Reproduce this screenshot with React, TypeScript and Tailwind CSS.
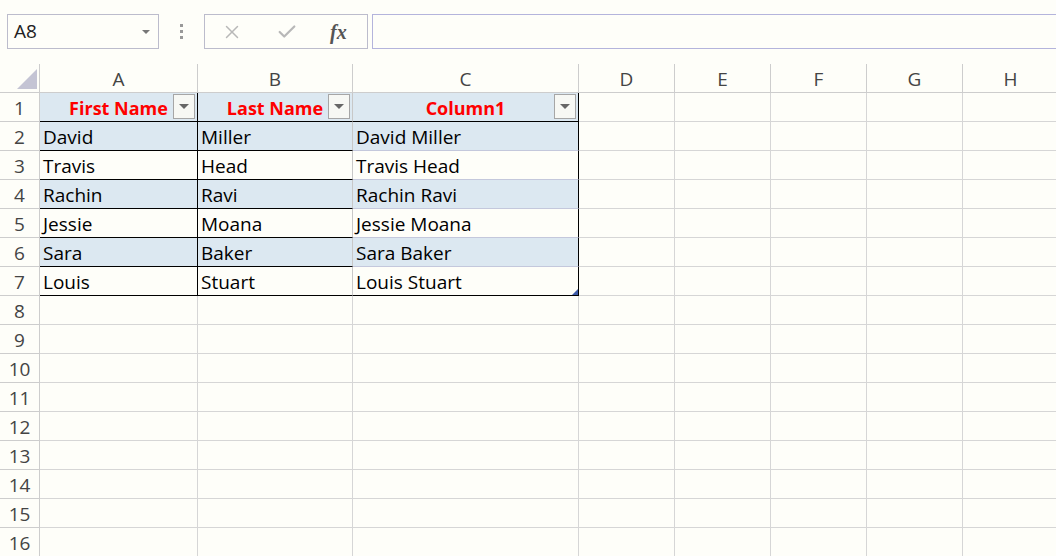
import { X, Check } from 'lucide-react';

const cols = ['A', 'B', 'C', 'D', 'E', 'F', 'G', 'H'];

const people = [
  ['David', 'Miller'],
  ['Travis', 'Head'],
  ['Rachin', 'Ravi'],
  ['Jessie', 'Moana'],
  ['Sara', 'Baker'],
  ['Louis', 'Stuart'],
];

const font = { fontFamily: '"Open Sans", "Noto Sans", sans-serif' };

function FilterButton() {
  return (
    <div className="absolute right-[2px] top-[1px] w-[22px] h-[25px] border border-[#a6a6a6] bg-[#f7f8f4] flex items-center justify-center">
      <div className="w-0 h-0 border-l-[5px] border-r-[5px] border-t-[5px] border-l-transparent border-r-transparent border-t-[#666]" />
    </div>
  );
}

function TopBar() {
  return (
    <div className="h-[64px] flex items-start pt-[14px] pl-[7px]">
      <div className="w-[152px] h-[35px] border border-[#bcbccc] flex items-center justify-between pl-[6px] pr-[8px] text-[19px] text-[#222]">
        <span>A8</span>
        <div className="w-0 h-0 border-l-[4px] border-r-[4px] border-t-[4px] border-l-transparent border-r-transparent border-t-[#777]" />
      </div>
      <div className="w-[45px] h-[35px] flex flex-col items-center justify-center gap-[3px]">
        <div className="w-[3px] h-[3px] bg-[#999]" />
        <div className="w-[3px] h-[3px] bg-[#999]" />
        <div className="w-[3px] h-[3px] bg-[#999]" />
      </div>
      <div className="w-[164px] h-[35px] border border-[#bcbccc] flex items-center pl-[16px]">
        <X className="w-[22px] h-[22px] text-[#b8b8b8]" strokeWidth={1.6} />
        <Check className="w-[22px] h-[22px] text-[#b8b8b8] ml-[33px]" strokeWidth={2.4} />
        <span className="ml-[32px] text-[20px] italic font-bold text-[#555]" style={{ fontFamily: '"Liberation Serif", serif' }}>
          fx
        </span>
      </div>
      <div className="flex-1 ml-[4px] h-[35px] border border-[#b4b4dc] border-r-0" />
    </div>
  );
}

export default function App() {
  const grid = 'border-r border-b border-[#d6d6d6]';
  const rowHead = 'border-r border-b border-[#cdcdcd] flex items-center justify-center pt-[2px] text-[19px] text-[#444]';
  const band = (i: number) => (i % 2 === 0 ? 'bg-[#dce8f1]' : '');
  const cell = 'flex items-center pl-[3px] pt-[2px] text-[19px] text-black whitespace-nowrap overflow-hidden';

  return (
    <div className="w-[1056px] h-[556px] overflow-hidden bg-[#fefef9]" style={font}>
      <TopBar />
      <div className="grid grid-cols-[40px_158px_155px_226px_96px_96px_96px_96px_96px] auto-rows-[29px]">
        {/* column headers */}
        <div className="border-r border-b border-[#cdcdcd] relative">
          <div className="absolute right-[2px] bottom-[3px] w-0 h-0 border-l-[20px] border-b-[20px] border-l-transparent border-b-[#c4c4d4]" />
        </div>
        {cols.map((c) => (
          <div key={c} className="border-r border-b border-[#cdcdcd] flex items-center justify-center pt-[3px] text-[19px] text-[#444]">
            {c}
          </div>
        ))}

        {/* row 1: table header */}
        <div className={rowHead}>1</div>
        <div className="relative bg-[#dce8f1] border-r border-b border-r-black border-b-black flex items-center justify-center pt-[2px] text-[18px] font-bold text-[#f00] whitespace-nowrap">
          First Name
          <FilterButton />
        </div>
        <div className="relative bg-[#dce8f1] border-r border-b border-r-[#c8c8c8] border-b-black flex items-center justify-center pt-[2px] text-[18px] font-bold text-[#f00] whitespace-nowrap">
          Last Name
          <FilterButton />
        </div>
        <div className="relative bg-[#dce8f1] border-r border-b border-r-black border-b-black flex items-center justify-center pt-[2px] text-[18px] font-bold text-[#f00] whitespace-nowrap">
          Column1
          <FilterButton />
        </div>
        {cols.slice(3).map((c) => (
          <div key={c} className={grid} />
        ))}

        {/* data rows */}
        {people.map(([first, last], i) => {
          const last7 = i === people.length - 1;
          return [
            <div key={`h${i}`} className={rowHead}>{i + 2}</div>,
            <div key={`a${i}`} className={`${band(i)} border-r border-b border-black ${cell}`}>
              {first}
            </div>,
            <div key={`b${i}`} className={`${band(i)} border-r border-b border-r-[#c8c8c8] border-b-black ${cell}`}>
              {last}
            </div>,
            <div
              key={`c${i}`}
              className={`${band(i)} relative border-r border-b border-r-black ${last7 ? 'border-b-black' : 'border-b-[#c4c8dc]'} ${cell}`}
            >
              {first} {last}
              {last7 && (
                <div className="absolute right-0 bottom-0 w-0 h-0 border-l-[6px] border-b-[6px] border-l-transparent border-b-[#3c5aa8]" />
              )}
            </div>,
            ...cols.slice(3).map((c) => <div key={`${c}${i}`} className={grid} />),
          ];
        })}

        {/* empty rows */}
        {Array.from({ length: 9 }, (_, k) => k + 8).map((r) => [
          <div key={`h${r}`} className={rowHead}>{r}</div>,
          ...cols.map((c) => <div key={`${c}${r}`} className={grid} />),
        ])}
      </div>
    </div>
  );
}
